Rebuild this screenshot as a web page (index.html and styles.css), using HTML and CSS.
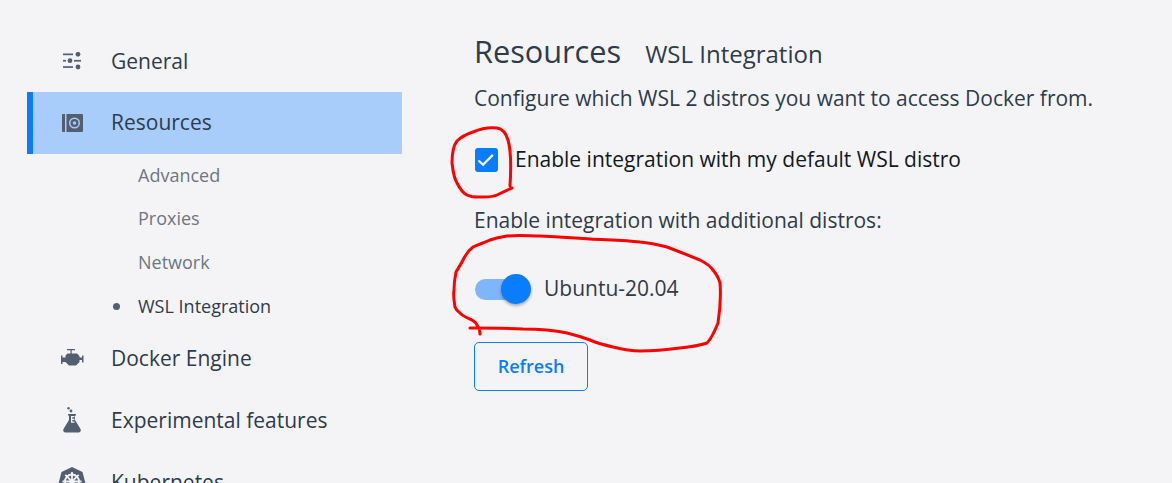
FILE: index.html
```html
<!DOCTYPE html>
<html lang="en">
<head>
<meta charset="utf-8">
<title>Resources - WSL Integration</title>
<link rel="stylesheet" href="styles.css">
</head>
<body>
<div class="page">
  <nav class="sidebar">
    <div class="nav-item">
      <span class="icon-slot"><svg class="icon-general" viewBox="0 0 18 18"><g fill="#535f70"><rect x="0" y="1.500" width="10" height="1.700"/><circle cx="15" cy="2.300" r="2.400"/><rect x="0" y="7.900" width="3" height="1.700"/><circle cx="7" cy="8.700" r="2.400"/><rect x="11" y="7.900" width="7" height="1.700"/><rect x="0" y="14.200" width="10" height="1.700"/><circle cx="15" cy="15" r="2.400"/></g></svg></span>
      <span>General</span>
    </div>
    <div class="nav-item active">
      <span class="icon-slot"><svg class="icon-resources" viewBox="0 0 21 18"><path fill="#535f70" fill-rule="evenodd" d="M0 1a1 1 0 0 1 1-1h2v18H1a1 1 0 0 1-1-1zM4.500 0H20a1 1 0 0 1 1 1v16a1 1 0 0 1-1 1H4.500zM12.500 3.500a5.500 5.500 0 1 0 0 11 5.500 5.500 0 0 0 0-11zM12.500 5a4 4 0 1 1 0 8 4 4 0 0 1 0-8zM12.500 7.300a1.700 1.700 0 1 0 0 3.400 1.700 1.700 0 0 0 0-3.400z"/></svg></span>
      <span>Resources</span>
    </div>
    <ul class="sub-list">
      <li>Advanced</li>
      <li>Proxies</li>
      <li>Network</li>
      <li class="current">WSL Integration</li>
    </ul>
    <div class="nav-item">
      <span class="icon-slot"><svg class="icon-engine" viewBox="0 0 24 18"><path fill="#535f70" d="M7 0h8v1.300h-3.300V4.500H17l2.500 2.500v1.500H22V6.500h1.500v7H22v-2.500h-2.500v2l-3.500 3.500H9l-3.500-3.500H2.500v2H1V6.500h1.500V8.500h3V6.500l2-2h3V1.300H7z"/></svg></span>
      <span>Docker Engine</span>
    </div>
    <div class="nav-item">
      <span class="icon-slot"><svg class="icon-flask" viewBox="0 0 18 26"><g fill="#535f70"><circle cx="5.500" cy="1.200" r="1.200"/><circle cx="8" cy="4" r="1.400"/><path d="M5 7h8v1.500h-1V13l5.500 9c.8 1.700 0 3.500-1.800 3.500H2.300C.5 25.500-.3 23.700.5 22L6 13V8.500H5z"/></g><path fill="#f4f4f7" d="M8 9h3.500v1.200H9.300v1.600h2.200V13H9.300v1.600h2.200v1.200H8z"/></svg></span>
      <span>Experimental features</span>
    </div>
    <div class="nav-item">
      <span class="icon-slot"><svg class="icon-kube" viewBox="0 0 30 30"><path fill="#535f70" d="M15 0l10.500 5 3 11.500-7.300 9.500H8.800L1.500 16.500l3-11.500z"/><g fill="none" stroke="#f4f4f7" stroke-width="1.800"><circle cx="15" cy="14.500" r="7"/><path d="M15 5v19M5.500 14.500h19M8.300 7.800l13.400 13.400M21.700 7.800L8.300 21.200"/></g></svg></span>
      <span>Kubernetes</span>
    </div>
  </nav>
  <main class="content">
    <h1 class="heading">Resources <small>WSL Integration</small></h1>
    <p class="intro">Configure which WSL 2 distros you want to access Docker from.</p>
    <label class="check-row">
      <span class="checkbox"><svg viewBox="0 0 23 24"><path d="M3.500 12.500l4.500 4.200 9.800-9.800" fill="none" stroke="#fff" stroke-width="2.200"/></svg></span>
      <span>Enable integration with my default WSL distro</span>
    </label>
    <p class="additional">Enable integration with additional distros:</p>
    <div class="switch-row">
      <span class="switch"><span class="thumb"></span></span>
      <span>Ubuntu-20.04</span>
    </div>
    <button class="refresh" type="button">Refresh</button>
  </main>
</div>
<svg class="scribble" viewBox="0 0 1172 483" aria-hidden="true">
  <path d="M510 186C511 170 511 150 508 140C506 133 503 129 497 128C488 127 480 129 473 132C467 134 461 137 457 141C453 146 452 154 452 163C453 172 454 178 457 183C460 189 463 193 467 195C473 198 478 197 483 197C489 197 493 197 497 195C503 192 507 190 512 188"/>
  <path d="M480 334C480 330 479 328 478 327C476 322 474 321 472 320C467 318 463 316 460 313C457 311 456 310 455 307C454 300 453 296 454 290C454 282 455 277 456 272C459 267 461 264 463 260C466 254 469 250 473 247C479 244 484 243 490 240C496 238 501 237 507 236C520 235 530 236 540 236C560 237 575 238 590 239C610 240 625 240 640 242C650 243 659 245 667 247C680 252 690 256 700 260C706 263 710 266 713 270C717 275 719 279 720 283C721 295 720 310 718 323C714 333 711 339 707 343C698 346 690 347 680 348C665 350 652 351 640 351C630 351 621 349 613 347C604 345 597 343 590 340C582 337 575 335 567 333C553 330 538 329 523 329C505 328 488 328 470 328"/>
</svg>
</body>
</html>
```
FILE: styles.css
```css
* { box-sizing: border-box; }
html, body { margin: 0; height: 483px; overflow: hidden; }
body {
  background: #f4f4f7;
  color: #2f3b4a;
  font-family: "Open Sans", "Noto Sans", sans-serif;
  position: relative;
}
.page { display: flex; height: 483px; overflow: hidden; }
.sidebar { width: 375px; margin-left: 27px; padding-top: 30px; flex: none; }
.nav-item {
  display: flex;
  align-items: center;
  gap: 25px;
  height: 62px;
  padding: 0 0 1px 31px;
  font-size: 21px;
}
.nav-item.active { background: #a8cdfa; border-left: 6px solid #0a7cff; padding: 0 0 3px 25px; }
.icon-slot { display: flex; align-items: center; justify-content: center; width: 28px; height: 30px; flex: none; }
.icon-slot svg { display: block; flex: none; }
.active .icon-slot { position: relative; top: 1px; }
.icon-general { width: 18px; height: 18px; }
.icon-resources { width: 21px; height: 18px; }
.icon-engine { width: 24px; height: 18px; }
.icon-flask { width: 18px; height: 26px; }
.icon-kube { width: 30px; height: 30px; }
.sub-list { list-style: none; margin: 0; padding: 0 0 0 111px; font-size: 18px; color: #6d7681; height: 173px; }
.sub-list li { height: 43.700px; line-height: 42px; position: relative; top: -.3px; }
.sub-list .current { color: #2f3b4a; }
.sub-list .current::before {
  content: "";
  position: absolute;
  left: -25px;
  top: 18px;
  width: 7px;
  height: 7px;
  border-radius: 50%;
  background: #535f70;
}
.content { margin-left: 72px; padding-top: 29px; flex: 1; }
.heading { margin: 0; font-size: 30.700px; font-weight: 400; line-height: 44px; }
.heading small { font-size: 24px; margin-left: 16px; }
.intro { margin: 7px 0 0; font-size: 21px; line-height: 30px; }
.check-row { display: flex; align-items: center; gap: 17px; margin-top: 31px; font-size: 21px; line-height: 30px; color: #13191f; }
.checkbox { width: 23px; height: 24px; margin-left: 1px; background: #0a7cff; border-radius: 3px; flex: none; position: relative; top: 1px; }
.checkbox svg { display: block; width: 23px; height: 24px; }
.additional { margin: 31px 0 0; font-size: 21px; line-height: 30px; }
.switch-row { display: flex; align-items: center; gap: 13px; margin-top: 38px; height: 30px; font-size: 21px; }
.switch { display: block; width: 57px; height: 22px; position: relative; flex: none; top: 1px; }
.switch::before { content: ""; position: absolute; left: 1px; top: 1px; width: 40px; height: 21px; border-radius: 11px; background: #7db6fb; }
.thumb { position: absolute; left: 27px; top: -4px; width: 30px; height: 30px; border-radius: 50%; background: #0a7cff; box-shadow: 0 2px 3px rgba(0,0,0,.3); }
.refresh {
  display: block;
  margin-top: 39px;
  width: 114px;
  height: 49px;
  padding: 0 0 2px;
  border: 1px solid #0a7cff;
  border-radius: 5px;
  background: transparent;
  color: #0a7cff;
  font: 600 18px "Open Sans", "Noto Sans", sans-serif;
}
.scribble { position: absolute; left: 0; top: 0; width: 1172px; height: 483px; pointer-events: none; }
.scribble path { fill: none; stroke: #f00; stroke-width: 3px; stroke-linecap: round; stroke-linejoin: round; }
```
